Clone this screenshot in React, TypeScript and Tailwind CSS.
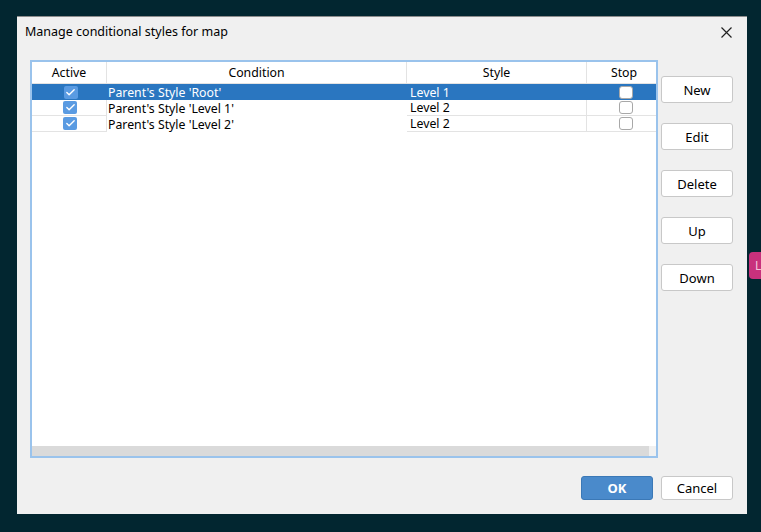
import { Check } from 'lucide-react';

const rows = [
  { condition: "Parent's Style 'Root'", style: 'Level 1', selected: true },
  { condition: "Parent's Style 'Level 1'", style: 'Level 2', selected: false },
  { condition: "Parent's Style 'Level 2'", style: 'Level 2', selected: false },
];

const sideButtons = ['New', 'Edit', 'Delete', 'Up', 'Down'];

function Checked() {
  return (
    <div className="w-[14px] h-[13px] rounded-[2px] bg-[#5a9be2] flex items-center justify-center">
      <Check className="w-[11px] h-[11px] text-white" strokeWidth={3} />
    </div>
  );
}

function Unchecked() {
  return <div className="w-[14px] h-[13px] rounded-[3px] bg-white border border-[#a8a8a8]" />;
}

export default function App() {
  return (
    <div
      className="w-[761px] h-[532px] bg-[#022630] relative overflow-hidden pl-[17px] pt-[16px] text-black"
      style={{ fontFamily: '"Segoe UI", "Noto Sans", sans-serif' }}
    >
      {/* Dialog */}
      <div className="w-[730px] h-[498px] bg-[#f0f0f0] border-t border-[#8c8c8c] flex flex-col">
        {/* Title bar */}
        <div className="h-[30px] flex items-center justify-between pl-[8px] pr-[15px]">
          <span className="text-[12.5px] pt-[1px]">Manage conditional styles for map</span>
          <svg width="11" height="11" viewBox="0 0 11 11" className="text-[#222]">
            <path d="M0.5 0.5 L10.5 10.5 M10.5 0.5 L0.5 10.5" stroke="currentColor" strokeWidth="1.2" />
          </svg>
        </div>

        {/* Body */}
        <div className="flex pl-[13px] pt-[13px] gap-[3px]">
          <div className="w-[628px] h-[398px] border-2 border-[#9ac3ec] bg-white flex flex-col text-[12.3px]">
            {/* Header */}
            <div className="grid grid-cols-[75px_300px_180px_69px] h-[22px] border-b border-[#e3e3e3]">
              {['Active', 'Condition', 'Style', 'Stop'].map((h, i) => (
                <div
                  key={h}
                  className={`flex items-center justify-center pt-[2px] ${i < 3 ? 'border-r border-[#e3e3e3]' : 'pl-[5px]'}`}
                >
                  {h}
                </div>
              ))}
            </div>

            {/* Rows */}
            {rows.map((r, i) => (
              <div
                key={i}
                className={`grid grid-cols-[75px_300px_180px_69px] h-[16px] ${r.selected ? 'bg-[#2a76c0] text-white' : ''}`}
              >
                <div className={`flex items-center justify-center pl-[2px] ${r.selected ? '' : 'border-r border-b border-[#e3e3e3]'}`}>
                  <Checked />
                </div>
                <div className="flex items-center pl-[1px] pt-[2px] leading-none">{r.condition}</div>
                <div className={`flex items-center pl-[3px] pt-[2px] leading-none ${r.selected ? '' : 'border-r border-b border-[#e3e3e3]'}`}>
                  {r.style}
                </div>
                <div className={`flex items-center justify-center pl-[8px] ${r.selected ? '' : 'border-b border-[#e3e3e3]'}`}>
                  <Unchecked />
                </div>
              </div>
            ))}

            <div className="flex-1" />

            {/* Horizontal scrollbar */}
            <div className="h-[10px] flex">
              <div className="flex-1 bg-[#dadada]" />
              <div className="w-[7px] bg-[#f0f0f0]" />
            </div>
          </div>

          {/* Side buttons */}
          <div className="flex flex-col pt-[16px] gap-[20px]">
            {sideButtons.map((b) => (
              <button
                key={b}
                className="w-[72px] h-[27px] bg-white border border-[#c8c8c8] rounded-[3px] text-[13px] pt-[2px] flex items-center justify-center"
              >
                {b}
              </button>
            ))}
          </div>
        </div>

        {/* Footer */}
        <div className="flex justify-end gap-[8px] pr-[14px] mt-[18px]">
          <button className="w-[72px] h-[24px] bg-[#4a8acb] border border-[#3b78b6] rounded-[3px] text-white font-bold text-[13px] pt-[1px] flex items-center justify-center">
            OK
          </button>
          <button className="w-[72px] h-[24px] bg-white border border-[#c8c8c8] rounded-[3px] text-[13px] pt-[2px] flex items-center justify-center">
            Cancel
          </button>
        </div>
      </div>

      {/* Side tab peeking at the right edge */}
      <div className="absolute left-[749px] top-[252px] w-[16px] h-[27px] bg-[#c8317c] rounded-l-[4px] flex items-center pl-[6px] text-[12px] text-[#f4c6dc]">
        L
      </div>
    </div>
  );
}
